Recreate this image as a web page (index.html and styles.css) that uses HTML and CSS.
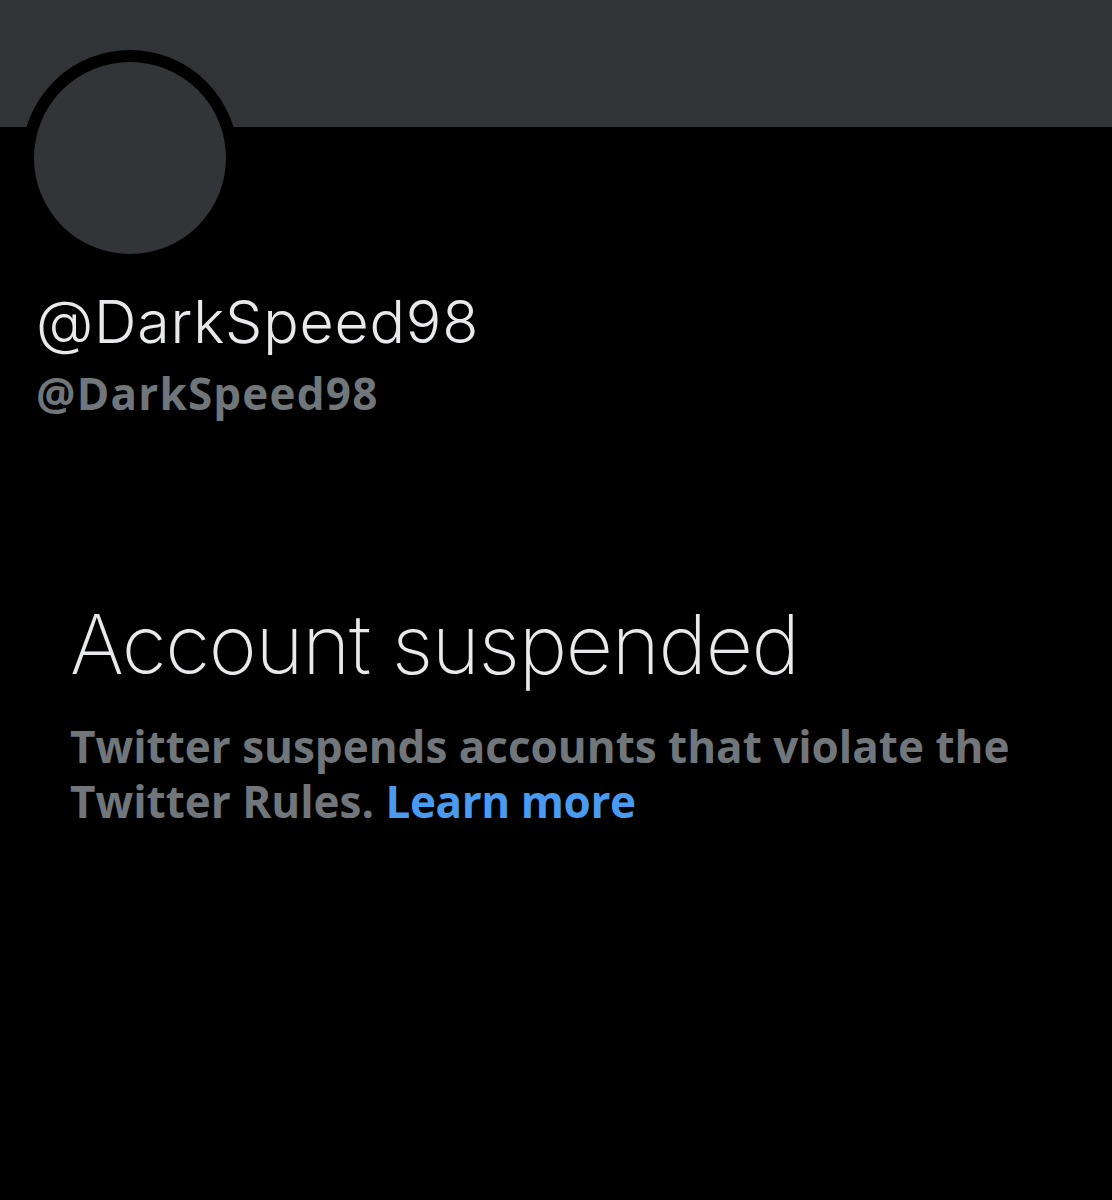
FILE: index.html
```html
<!DOCTYPE html>
<html lang="en">
<head>
<meta charset="utf-8">
<title>@DarkSpeed98</title>
<link rel="stylesheet" href="styles.css">
</head>
<body>
  <header class="banner"></header>
  <section class="profile">
    <div class="avatar"></div>
    <div class="names">
      <div class="display-name">@DarkSpeed98</div>
      <div class="handle">@DarkSpeed98</div>
    </div>
  </section>
  <section class="notice">
    <h1 class="notice-title">Account suspended</h1>
    <p class="notice-text">Twitter suspends accounts that violate the Twitter Rules. <a class="notice-link" href="#">Learn more</a></p>
  </section>
</body>
</html>
```

FILE: styles.css
```css
html, body {
  margin: 0;
  padding: 0;
  background: #000;
}

body {
  width: 1112px;
  min-height: 1200px;
  font-family: Inter, "Noto Sans", sans-serif;
  color: #e7e9ea;
}

.banner {
  height: 127px;
  background: #313336;
}

.profile {
  padding-left: 22px;
}

.avatar {
  width: 192px;
  height: 192px;
  margin-top: -77px;
  border: 12px solid #000;
  border-radius: 50%;
  background: #323437;
}

.names {
  padding-left: 14px;
  margin-top: 21px;
}

.display-name {
  font-size: 59px;
  font-weight: 300;
  line-height: 70px;
  letter-spacing: 0.8px;
}

.handle {
  margin-top: 11px;
  font-family: "Open Sans", "Noto Sans", sans-serif;
  font-size: 44px;
  font-weight: 700;
  line-height: 50px;
  letter-spacing: 1.2px;
  color: #71767b;
}

.notice {
  padding: 0 70px;
  margin-top: 177px;
}

.notice-title {
  margin: 0;
  font-size: 82px;
  font-weight: 200;
  line-height: 100px;
  letter-spacing: -1.3px;
}

.notice-text {
  margin: 24px 0 0;
  font-family: "Open Sans", "Noto Sans", sans-serif;
  font-size: 44px;
  font-weight: 700;
  line-height: 55px;
  color: #71767b;
}

.notice-link {
  display: inline-block;
  color: #4a9af0;
  text-decoration: none;
  letter-spacing: -0.4px;
}
```
